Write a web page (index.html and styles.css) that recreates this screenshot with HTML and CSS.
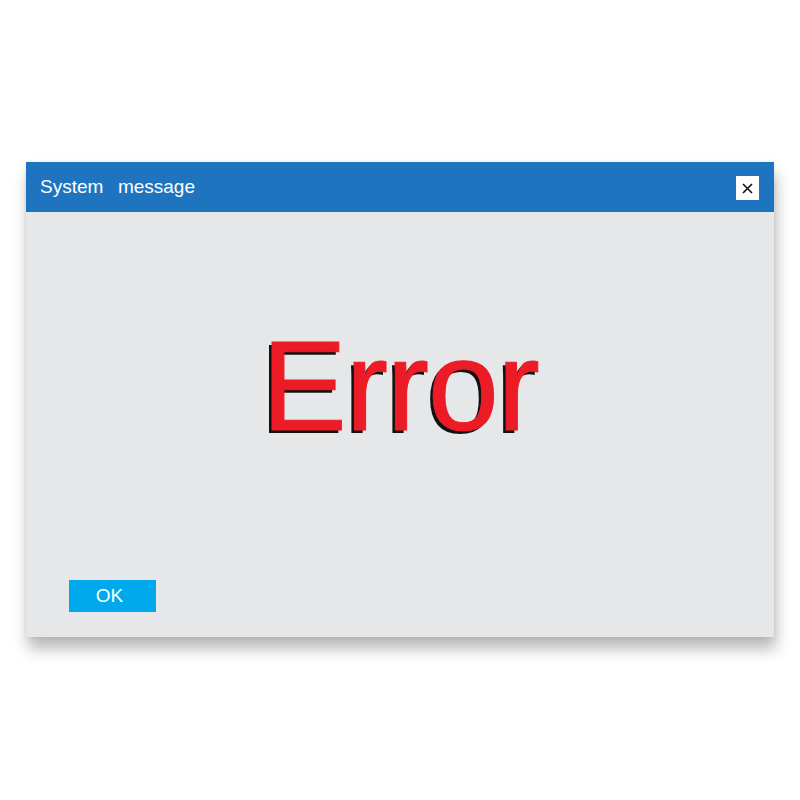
FILE: index.html
```html
<!DOCTYPE html>
<html lang="en">
<head>
<meta charset="utf-8">
<title>System message</title>
<link rel="stylesheet" href="styles.css">
</head>
<body>
  <div class="dialog">
    <div class="titlebar">
      <span class="title">System&nbsp; message</span>
      <button class="close" aria-label="Close">
        <svg width="11" height="11" viewBox="0 0 11 11"><path d="M1 1 L10 10 M10 1 L1 10" stroke="#111" stroke-width="1.6" fill="none"/></svg>
      </button>
    </div>
    <div class="content">
      <div class="message">Error</div>
      <button class="ok">OK</button>
    </div>
  </div>
</body>
</html>
```

FILE: styles.css
```css
html, body {
  margin: 0;
  padding: 0;
  background: #ffffff;
}

body {
  width: 800px;
  height: 800px;
  font-family: "Liberation Sans", Arial, sans-serif;
}

.dialog {
  margin: 162px 0 0 26px;
  width: 748px;
  height: 475px;
  display: flex;
  flex-direction: column;
  background: #e6e7e9;
  box-shadow: 2px 12px 14px rgba(0, 0, 0, 0.28), 0 0 4px rgba(0, 0, 0, 0.08);
}

.titlebar {
  height: 50px;
  flex: none;
  background: #1e74be;
  display: flex;
  align-items: center;
  justify-content: space-between;
  padding: 0 15px 0 14px;
}

.title {
  color: #ffffff;
  font-size: 19px;
  line-height: 20px;
  word-spacing: 2px;
  margin-top: -1px;
}

.close {
  width: 23px;
  height: 24px;
  margin-top: 2px;
  padding: 0;
  border: none;
  background: #ffffff;
  display: flex;
  align-items: center;
  justify-content: center;
}

.content {
  flex: 1;
  display: flex;
  flex-direction: column;
  padding: 110px 0 0 43px;
}

.message {
  margin-left: -43px;
  text-align: center;
  font-size: 128px;
  line-height: 128px;
  letter-spacing: -1.5px;
  color: #ec1c27;
  -webkit-text-stroke: 1px #ec1c27;
  text-shadow: -3px 3px 0 #111;
}

.ok {
  margin-top: 130px;
  width: 87px;
  height: 32px;
  padding: 0 6px 0 0;
  border: none;
  background: #00a9eb;
  color: #ffffff;
  font-family: "Liberation Sans", Arial, sans-serif;
  font-size: 19px;
}
```
